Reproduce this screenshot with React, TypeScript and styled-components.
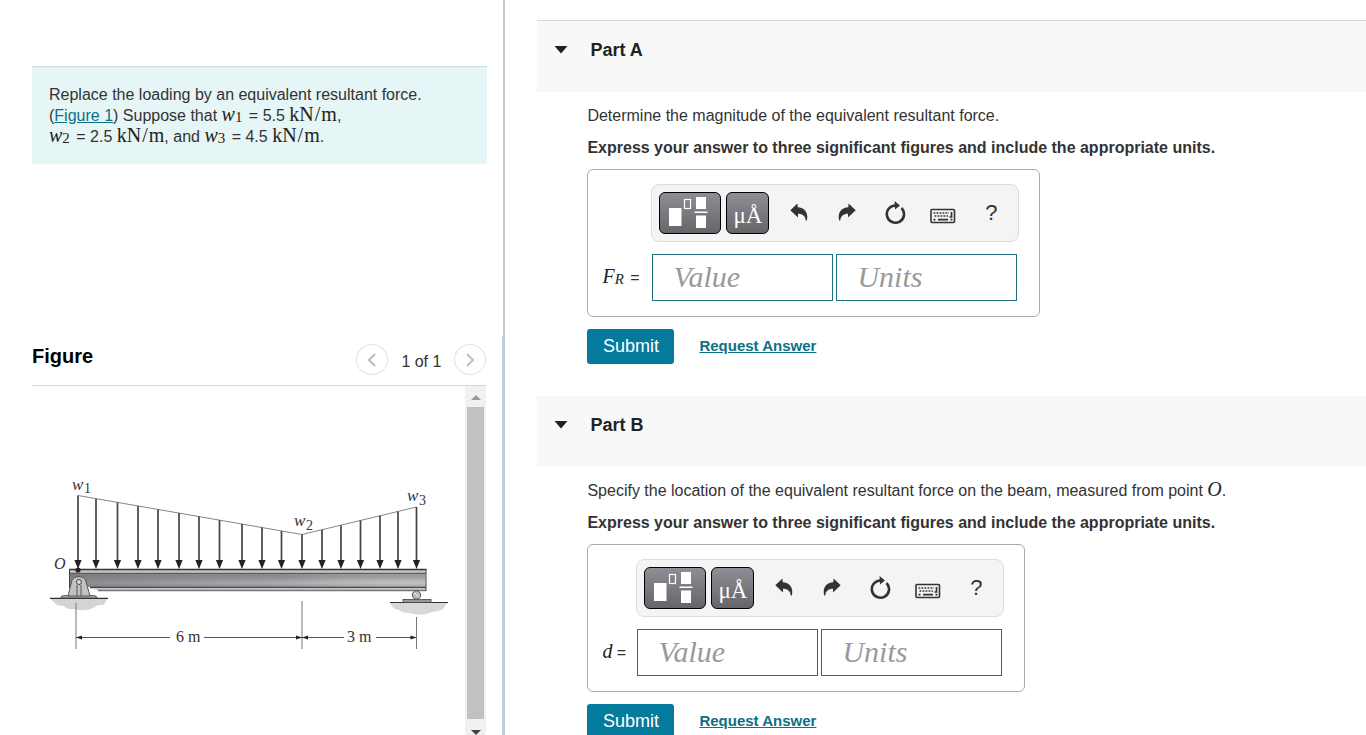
import React from 'react';
import styled, { createGlobalStyle } from 'styled-components';

const sans = `"Liberation Sans", Arial, sans-serif`;
const serif = `"Liberation Serif", "Times New Roman", serif`;

const GlobalStyle = createGlobalStyle`
  *, *::before, *::after { box-sizing: border-box; }
  body {
    margin: 0;
    background: #fff;
    color: #333;
    font: 16px/20px ${sans};
  }
  button, input { font: inherit; color: inherit; }
`;

const Page = styled.div`
  display: flex;
  height: 100vh;
  overflow: hidden;
`;

const LeftPane = styled.aside`
  width: 37%;
  flex: none;
  display: flex;
  flex-direction: column;
  align-items: stretch;
`;

const IntroArea = styled.section`
  flex: 0 0 336px;
  padding: 66px 16px 0 32px;
  border-right: 2px solid #c0ced6;
`;

const Intro = styled.div`
  padding: 17px;
  border-top: 1px solid #d0dcdc;
  background: #e6f6f6;
`;

const IntroText = styled.p`
  margin: 0;
  line-height: 21px;
`;

const Link = styled.a`
  color: #0b7187;
  text-decoration: underline;
`;

const MathText = styled.span`
  font: 20px/0 ${serif};
  color: #222;
`;

const Slash = styled.span`
  padding: 0 1px;
`;

const Variable = styled.i`
  font: italic 20px/0 ${serif};
  color: #222;
`;

const Sub = styled.sub`
  padding-right: 2px;
  font: 15px/0 ${serif};
  vertical-align: -1px;
`;

const FigureArea = styled.section`
  flex: 1;
  min-height: 0;
  display: flex;
  flex-direction: column;
  padding: 0 16px 0 32px;
  border-right: 3px solid #c0ced6;
`;

const FigureHeader = styled.header`
  flex: 0 0 50px;
  display: flex;
  justify-content: space-between;
  padding-top: 8px;
  border-bottom: 1px solid #d6d6d6;
`;

const FigureTitle = styled.h2`
  margin: 0;
  font-size: 20px;
  line-height: 24px;
  color: #000;
`;

const Pager = styled.nav`
  display: flex;
  align-items: flex-start;
  gap: 13px;
`;

const PagerCount = styled.span`
  padding-top: 8px;
`;

const RoundButton = styled.button`
  display: grid;
  place-items: center;
  width: 32px;
  height: 31px;
  padding: 0;
  border: 1px solid #e2e2e2;
  border-radius: 50%;
  background: #fff;
  color: #bdbdbd;
`;

const FigureBody = styled.div`
  flex: 1;
  min-height: 0;
  display: flex;
`;

const FigureCanvas = styled.div`
  flex: 1;
  min-width: 0;
  overflow: hidden;
`;

const ScrollTrack = styled.div`
  flex: none;
  width: 21px;
  display: flex;
  flex-direction: column;
  padding: 0 2px;
  background: #f1f1f1;
`;

const ScrollArrow = styled.div<{ $height: number }>`
  flex: 0 0 ${p => p.$height}px;
  display: grid;
  place-items: end center;
`;

const ScrollThumb = styled.div`
  flex: 1;
  background: #c1c1c1;
`;

const RightPane = styled.main`
  flex: 1;
  min-width: 0;
  padding: 20px 0 0 32px;
`;

const PartSection = styled.section`
  padding-bottom: 31px;
`;

const PartHeader = styled.header<{ $ruled?: boolean }>`
  display: flex;
  align-items: flex-start;
  gap: 22px;
  height: 72px;
  padding: 19px 17px;
  border-top: 1px solid ${p => (p.$ruled ? '#d8d8d8' : 'transparent')};
  background: #f8f8f8;
  background-clip: padding-box;
`;

const ToggleButton = styled.button`
  display: grid;
  place-items: center;
  width: 14px;
  height: 20px;
  padding: 0;
  border: 0;
  background: none;
`;

const PartTitle = styled.h2`
  margin: 0;
  font-size: 18px;
  line-height: 20px;
  color: #222;
`;

const PartBody = styled.div`
  padding: 14px 50px 0;
`;

const Prompt = styled.p`
  margin: 0 0 12px;
`;

const Instruction = styled.p`
  margin: 0 0 11px;
  font-weight: bold;
`;

const AnswerBox = styled.div<{ $label: number }>`
  display: grid;
  grid-template-columns: ${p => p.$label}px 368px;
  row-gap: 12px;
  width: fit-content;
  padding: 14px 20px 15px 14px;
  border: 1px solid #aaa;
  border-radius: 6px;
`;

const Toolbar = styled.div`
  grid-column: 2;
  display: flex;
  align-items: center;
  gap: 5px;
  height: 58px;
  padding-left: 7px;
  border: 1px solid #ddd;
  border-radius: 8px;
  background: #f4f4f4;
`;

const DarkButton = styled.button<{ $width: number }>`
  display: grid;
  place-items: center;
  flex: none;
  width: ${p => p.$width}px;
  height: 42px;
  padding: 0;
  border: 1px solid #000;
  border-radius: 6px;
  background: linear-gradient(#8f8e94, #66656a);
  color: #fff;
  font: 23px/30px ${serif};
`;

const UnitGlyphs = styled.span`
  padding-top: 5px;
`;

const ToolGroup = styled.div`
  display: flex;
  padding-left: 1px;
`;

const ToolButton = styled.button`
  display: grid;
  place-items: center;
  flex: none;
  width: 48px;
  height: 42px;
  padding: 0;
  border: 0;
  background: none;
  color: #333;
  font-size: 22px;
`;

const AnswerLabel = styled.label`
  align-self: center;
  font-size: 16px;
`;

const Fields = styled.div`
  display: flex;
  gap: 3px;
  padding: 0 2px 0 1px;
`;

const Field = styled.input`
  flex: 1;
  min-width: 0;
  height: 47px;
  padding: 0 20px 2px;
  border: 1px solid #1f6f85;
  border-radius: 0;
  background: #fff;
  font: italic 30px/43px ${serif};

  &::placeholder { color: #999; opacity: 1; }
`;

const Actions = styled.div`
  display: flex;
  align-items: center;
  gap: 25px;
  margin-top: 12px;
`;

const SubmitButton = styled.button`
  width: 87px;
  height: 35px;
  padding: 0 0 2px;
  border: 0;
  border-radius: 3px;
  background: #047a9c;
  color: #fff;
  font-size: 18px;
`;

const RequestLink = styled(Link)`
  padding-bottom: 2px;
  font-size: 15px;
  font-weight: bold;
`;

function Unit() {
  return <MathText>kN<Slash>/</Slash>m</MathText>;
}

function W({ n }: { n: number }) {
  return <Variable>w<Sub>{n}</Sub></Variable>;
}

function Chevron({ d }: { d: string }) {
  return (
    <svg width="12" height="16" viewBox="0 0 12 16" fill="none" stroke="currentColor" strokeWidth="2">
      <path d={d} />
    </svg>
  );
}

const BEAM_Y = 183;
const loads: [number, number][] = [46, 64, 85.5, 106, 126, 147, 167, 187.5, 210, 230, 249.5, 270, 290, 309, 328.5, 348, 366, 384.5].map(
  x => [x, x <= 270 ? 109.5 + ((x - 46) * 39) / 224 : 148.5 - ((x - 270) * 27.5) / 114.5],
);

function BeamFigure() {
  return (
    <svg width="433" height="300" viewBox="0 0 433 300" role="img" aria-label="Beam with distributed loading">
      <defs>
        <linearGradient id="web" x1="0" y1="0" x2="0" y2="1">
          <stop offset="0" stopColor="#858589" />
          <stop offset="0.3" stopColor="#909094" />
          <stop offset="0.7" stopColor="#b9b9bc" />
          <stop offset="1" stopColor="#98989b" />
        </linearGradient>
        <linearGradient id="shade" x1="0" y1="0" x2="1" y2="0">
          <stop offset="0" stopColor="#77777b" stopOpacity="0.7" />
          <stop offset="0.6" stopColor="#8a8a8e" stopOpacity="0.3" />
          <stop offset="1" stopColor="#fff" stopOpacity="0.15" />
        </linearGradient>
      </defs>

      <rect x="37.5" y="184" width="356" height="3.5" fill="#c4c4c4" />
      <rect x="37.5" y="187" width="356" height="14" fill="url(#web)" />
      <rect x="37.5" y="187" width="356" height="14" fill="url(#shade)" />
      <path d="M58 201.500H394V204.500H66Q62 201.500 58 203.500Z" fill="#c6c6c8" />
      <path d="M37 183.500H394.500" stroke="#333" strokeWidth="1.500" />
      <path d="M37 187.300H394" stroke="#555" />
      <path d="M58 201.300H394" stroke="#4a4a4a" strokeWidth="1.200" />
      <path d="M66 204.500H394" stroke="#777" strokeWidth="1.300" />
      <path d="M394 183V205M37.500 183V202" stroke="#444" />

      <path d="M46 109.500L270 148.500L384.500 121" fill="none" stroke="#777" strokeWidth="0.900" />
      {loads.map(([x, y]) => (
        <g key={x}>
          <path d={`M${x} ${y}V176`} stroke="#444" strokeWidth="1.700" />
          <path d={`M${x - 3.6} 174H${x + 3.6}L${x} ${BEAM_Y}Z`} fill="#222" />
        </g>
      ))}
      <circle cx="46" cy="184" r="2.600" fill="#222" />

      <path d="M18 212.500H76Q73 215 72 219Q66 218 61 222Q52 226 42 223Q36 224 32 220Q24 220 22 216Z" fill="#d4d4d4" />
      <path d="M18 212.300H76" stroke="#333" strokeWidth="1.200" />
      <path d="M29 212V210.500Q30 209.500 34 209.500H62Q65 210 65 212Z" fill="#a5a5a5" stroke="#444" strokeWidth="0.800" />
      <path d="M36 210L40 194Q42 190.500 47 190.500Q52 190.500 53.500 194L58 210Z" fill="#c2c2c2" stroke="#555" />
      <path d="M45 210V199M49 210V199" stroke="#555" />
      <circle cx="47" cy="196" r="2.500" fill="#ddd" stroke="#444" />

      <path d="M358 216.500H416Q413 219 411 223Q406 226 400 226Q390 231 378 227Q370 227 367 224Q360 223 358 216.500Z" fill="#d8d8d8" />
      <path d="M358 216.500H416" stroke="#333" strokeWidth="1.200" />
      <rect x="371" y="213.500" width="28" height="3" fill="#999" stroke="#444" strokeWidth="0.800" />
      <circle cx="384.500" cy="209" r="4.200" fill="#bbb" stroke="#555" />
      <path d="M382 207L387 211" stroke="#eee" />

      <path d="M44 217V263M270 215V263M384.500 231V263" stroke="#777" />
      <path d="M44 251.500H138M172 251.500H312M344 251.500H384" stroke="#555" />
      <path d="M44 251.500l6-2v4zM270 251.500l-6-2v4zM270 251.500l6-2v4zM384.500 251.500l-6-2v4z" fill="#222" />

      <g fontFamily='"Liberation Serif", serif' fontSize="17" fill="#333">
        <text x="40" y="104" fontStyle="italic">w</text>
        <text x="52" y="107" fontSize="14">1</text>
        <text x="262" y="140" fontStyle="italic">w</text>
        <text x="274" y="144" fontSize="14">2</text>
        <text x="375" y="115" fontStyle="italic">w</text>
        <text x="387" y="119" fontSize="14">3</text>
        <text x="22" y="183" fontSize="16" fontStyle="italic">O</text>
        <text x="144" y="256" fontSize="16">6 m</text>
        <text x="315" y="256" fontSize="16">3 m</text>
      </g>
    </svg>
  );
}

function TemplateIcon() {
  return (
    <svg width="42" height="34" viewBox="0 0 42 34" fill="#fff">
      <rect x="0" y="12" width="12.500" height="18" />
      <rect x="15.500" y="3.500" width="6" height="9" fill="none" stroke="#fff" strokeWidth="1.200" />
      <rect x="27" y="1" width="10" height="12" />
      <rect x="25.500" y="15.500" width="13" height="1.500" />
      <rect x="27" y="19.500" width="10" height="12.500" />
    </svg>
  );
}

function UndoIcon({ flip }: { flip?: boolean }) {
  return (
    <svg width="18" height="20" viewBox="0 0 18 20" fill="currentColor">
      <path
        transform={flip ? 'matrix(-1 0 0 1 18 0)' : undefined}
        d="M0.300 7.200L7.500 0.500L7.700 4.200C13.500 4 19 9 16.800 17.500H15.700C15.500 13 12.500 10.700 8 10.700L8 14.500Z"
      />
    </svg>
  );
}

function ResetIcon() {
  return (
    <svg width="22" height="24" viewBox="0 0 22 24">
      <path d="M11.500 4.500A8.600 8.600 0 1 0 17.500 7" fill="none" stroke="currentColor" strokeWidth="2.600" />
      <path d="M10.500 0L16 4.500L11 8.500Z" fill="currentColor" />
    </svg>
  );
}

function KeyboardIcon() {
  return (
    <svg width="26" height="24" viewBox="0 0 26 24" fill="none" stroke="currentColor">
      <rect x="1" y="8.500" width="23.500" height="13" rx="1" strokeWidth="1.600" />
      <path d="M3.500 12H19M4.500 15H18" strokeWidth="1.700" strokeDasharray="1.800 1.200" />
      <path d="M21.500 11V16H19.500M8 18.700H18" strokeWidth="1.700" />
      <path d="M3.500 18.700H5.500M20.500 18.700H22.500" strokeWidth="1.700" />
    </svg>
  );
}

interface PartProps {
  id: string;
  title: string;
  ruled?: boolean;
  labelWidth: number;
  label: React.ReactNode;
  children: React.ReactNode;
}

function Part({ id, title, ruled, labelWidth, label, children }: PartProps) {
  return (
    <PartSection>
      <PartHeader $ruled={ruled}>
        <ToggleButton aria-label={`Toggle ${title}`}>
          <svg width="14" height="8" viewBox="0 0 14 8" fill="#222"><path d="M0.500 0H13.500L7 7.500Z" /></svg>
        </ToggleButton>
        <PartTitle>{title}</PartTitle>
      </PartHeader>
      <PartBody>
        <Prompt>{children}</Prompt>
        <Instruction>Express your answer to three significant figures and include the appropriate units.</Instruction>
        <AnswerBox $label={labelWidth}>
          <Toolbar role="toolbar">
            <DarkButton $width={62} aria-label="Templates"><TemplateIcon /></DarkButton>
            <DarkButton $width={43}><UnitGlyphs>μÅ</UnitGlyphs></DarkButton>
            <ToolGroup>
              <ToolButton aria-label="Undo"><UndoIcon /></ToolButton>
              <ToolButton aria-label="Redo"><UndoIcon flip /></ToolButton>
              <ToolButton aria-label="Reset"><ResetIcon /></ToolButton>
              <ToolButton aria-label="Keyboard shortcuts"><KeyboardIcon /></ToolButton>
              <ToolButton aria-label="Help">?</ToolButton>
            </ToolGroup>
          </Toolbar>
          <AnswerLabel htmlFor={`${id}-value`}>{label} =</AnswerLabel>
          <Fields>
            <Field id={`${id}-value`} placeholder="Value" />
            <Field aria-label="Units" placeholder="Units" />
          </Fields>
        </AnswerBox>
        <Actions>
          <SubmitButton type="button">Submit</SubmitButton>
          <RequestLink href="#request">Request Answer</RequestLink>
        </Actions>
      </PartBody>
    </PartSection>
  );
}

export default function App() {
  return (
    <Page>
      <GlobalStyle />
      <LeftPane>
        <IntroArea>
          <Intro>
            <IntroText>
              Replace the loading by an equivalent resultant force.
              <br />
              (<Link href="#figure">Figure 1</Link>) Suppose that <W n={1} /> = 5.5 <Unit />,
              <br />
              <W n={2} /> = 2.5 <Unit />, and <W n={3} /> = 4.5 <Unit />.
            </IntroText>
          </Intro>
        </IntroArea>
        <FigureArea id="figure">
          <FigureHeader>
            <FigureTitle>Figure</FigureTitle>
            <Pager aria-label="Figure pages">
              <RoundButton aria-label="Previous figure"><Chevron d="M9 2L3 8L9 14" /></RoundButton>
              <PagerCount>1 of 1</PagerCount>
              <RoundButton aria-label="Next figure"><Chevron d="M3 2L9 8L3 14" /></RoundButton>
            </Pager>
          </FigureHeader>
          <FigureBody>
            <FigureCanvas><BeamFigure /></FigureCanvas>
            <ScrollTrack>
              <ScrollArrow $height={21}>
                <svg width="10" height="12" viewBox="0 0 10 12" fill="#999"><path d="M0 5L5 0L10 5Z" /></svg>
              </ScrollArrow>
              <ScrollThumb />
              <ScrollArrow $height={16}>
                <svg width="10" height="5" viewBox="0 0 10 5" fill="#444"><path d="M0 0H10L5 5Z" /></svg>
              </ScrollArrow>
            </ScrollTrack>
          </FigureBody>
        </FigureArea>
      </LeftPane>
      <RightPane>
        <Part id="part-a" title="Part A" ruled labelWidth={49} label={<Variable>F<Sub><i>R</i></Sub></Variable>}>
          Determine the magnitude of the equivalent resultant force.
        </Part>
        <Part id="part-b" title="Part B" labelWidth={34} label={<Variable>d</Variable>}>
          Specify the location of the equivalent resultant force on the beam, measured from point <Variable>O</Variable>.
        </Part>
      </RightPane>
    </Page>
  );
}
